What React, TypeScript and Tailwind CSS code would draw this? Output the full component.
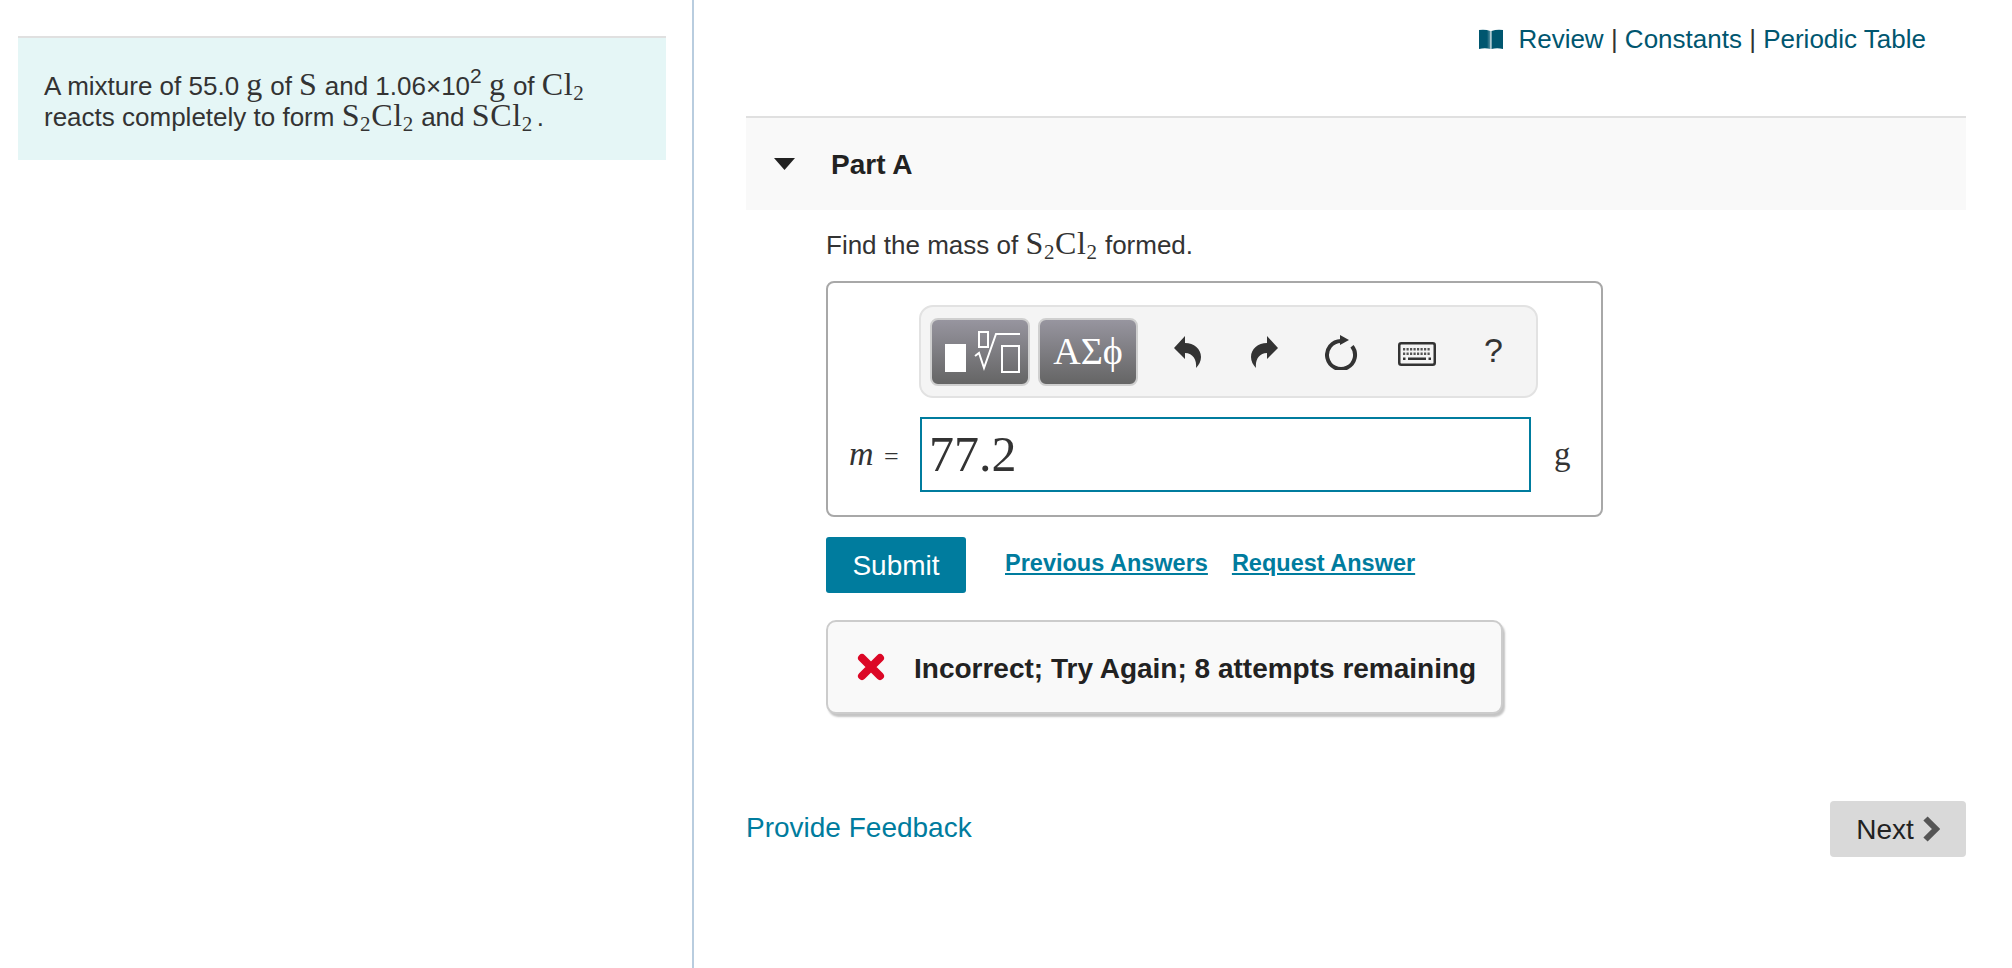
const sans = "font-['Liberation_Sans',Arial,sans-serif]";
const serif = "font-['Liberation_Serif','Times_New_Roman',serif]";

function Sub({ children }: { children: string }) {
  return <sub className="relative -bottom-[5px] align-baseline text-[21px] leading-none">{children}</sub>;
}

function M({ children }: { children: React.ReactNode }) {
  return <span className={`${serif} text-[32px] leading-none tracking-[0.02em]`}>{children}</span>;
}

function BookIcon() {
  return (
    <svg width="24" height="21" viewBox="0 0 24 21">
      <defs>
        <linearGradient id="page" x1="0" x2="1" y1="0" y2="0">
          <stop offset="0" stopColor="#00566f" />
          <stop offset="0.7" stopColor="#00566f" />
          <stop offset="1" stopColor="#5f93a3" />
        </linearGradient>
      </defs>
      <path d="M0 1 Q6 0 11.5 2 V20 Q6 18.5 0 20 Z" fill="url(#page)" />
      <path d="M24 1 Q18 0 12.5 2 V20 Q18 18.5 24 20 Z" fill="#00566f" />
    </svg>
  );
}

function UndoIcon({ flip }: { flip?: boolean }) {
  return (
    <svg width="27" height="32" viewBox="0 0 27 32" fill="#333" className={flip ? "-scale-x-100" : ""}>
      <path d="M0 12 L11 0 V7 C20 7 27 13 27 21 C27 25 25 29 22 32 C23 24 19 17 11 17 V23 Z" />
    </svg>
  );
}

function ResetIcon() {
  return (
    <svg width="34" height="36" viewBox="0 0 34 36">
      <path d="M16 7 A14 14 0 1 0 27 12.3" fill="none" stroke="#333" strokeWidth="4" />
      <path d="M15 1 L24 6 L15 11 Z" fill="#333" />
    </svg>
  );
}

function KeyboardIcon() {
  const keys = [5, 8.5, 12, 15.5, 19, 22.5, 26, 29.5];
  return (
    <svg width="38" height="24" viewBox="0 0 38 24">
      <rect x="1.25" y="1.25" width="35.5" height="21.5" rx="2" fill="#f4f4f4" stroke="#333" strokeWidth="2.5" />
      {[6, 10.5].map((y) => keys.map((x) => <rect key={`${y}-${x}`} x={x} y={y} width="2.2" height="2.5" fill="#555" />))}
      <rect x="5" y="15.5" width="2.5" height="2.5" fill="#333" />
      <rect x="10" y="15.5" width="18" height="2.5" fill="#333" />
      <rect x="30.5" y="15.5" width="2.5" height="2.5" fill="#333" />
    </svg>
  );
}

function TemplateIcon() {
  return (
    <svg width="96" height="64" viewBox="0 0 96 64" fill="none" stroke="#fff" strokeWidth="2">
      <rect x="13" y="24" width="21" height="28" fill="#fff" stroke="none" />
      <rect x="47" y="12" width="9" height="15" />
      <path d="M43 36 L47 33 L52 48 L64 14 H88" />
      <rect x="70" y="26" width="17" height="26" />
    </svg>
  );
}

export default function App() {
  const toolBtn =
    "flex h-[68px] w-[100px] items-center justify-center rounded-[8px] border-2 border-[#cfcfcf] bg-gradient-to-b from-[#97959f] to-[#656565]";
  return (
    <div className={`${sans} flex h-[968px] w-[2012px] overflow-hidden bg-white text-[26px] leading-[31px] text-[#333]`}>
      <aside className="h-full w-[694px] shrink-0 border-r-2 border-[#b9cddf] pl-[18px] pr-[26px] pt-[36px]">
        <div className="h-[124px] border-t-2 border-[#e0e0e0] bg-[#e5f6f6] pl-[26px] pt-[30px]">
          <p className="h-[31px]">
            A mixture of 55.0 <M>g</M> of <M>S</M> and 1.06×10
            <sup className="relative -top-[12px] align-baseline text-[21px] leading-none">2</sup> <M>g</M> of{" "}
            <M>
              Cl<Sub>2</Sub>
            </M>
          </p>
          <p className="h-[31px]">
            reacts completely to form{" "}
            <M>
              S<Sub>2</Sub>Cl<Sub>2</Sub>
            </M>{" "}
            and{" "}
            <M>
              SCl<Sub>2</Sub>
            </M>
            <span className="ml-[4px]">.</span>
          </p>
        </div>
      </aside>

      <main className="min-w-0 flex-1 pl-[52px] pr-[46px]">
        <div className="flex h-[116px] items-start justify-end pr-[40px] pt-[24px]">
          <div className="mr-[15px] mt-[5px]">
            <BookIcon />
          </div>
          <div className="text-[#00566f]">
            Review <span className="text-[#333]">|</span> Constants <span className="text-[#333]">|</span> Periodic Table
          </div>
        </div>

        <div className="flex h-[94px] items-center border-t-2 border-[#e0e0e0] bg-[#f9f9f9] pl-[28px]">
          <svg width="21" height="12" viewBox="0 0 21 12" fill="#222">
            <path d="M0 0 H21 L10.5 12 Z" />
          </svg>
          <h2 className="ml-[36px] text-[28px] font-bold text-[#222]">Part A</h2>
        </div>

        <div className="pl-[80px]">
          <p className="mt-[17px] h-[31px]">
            Find the mass of{" "}
            <M>
              S<Sub>2</Sub>Cl<Sub>2</Sub>
            </M>{" "}
            formed.
          </p>

          <div className="mt-[23px] h-[236px] w-[777px] rounded-[8px] border-2 border-[#a8a8a8] pl-[91px] pt-[22px]">
            <div className="flex h-[93px] w-[619px] items-center rounded-[14px] border-2 border-[#e2e2e2] bg-[#f4f4f4] pl-[9px]">
              <div className={toolBtn}>
                <TemplateIcon />
              </div>
              <div className={`${toolBtn} ml-[8px] ${serif} text-[38px] text-white`}>ΑΣϕ</div>
              <div className="ml-[36px]">
                <UndoIcon />
              </div>
              <div className="ml-[50px]">
                <UndoIcon flip />
              </div>
              <div className="ml-[47px]">
                <ResetIcon />
              </div>
              <div className="ml-[39px] mt-[5px]">
                <KeyboardIcon />
              </div>
              <div className="ml-[48px] -mt-[3px] text-[34px]">?</div>
            </div>

            <div className="mt-[19px] flex items-center">
              <span className={`${serif} -ml-[70px] w-[71px] text-[34px]`}>
                <i>m</i> <span className="ml-[2px] text-[26px]">=</span>
              </span>
              <div className="flex h-[75px] w-[611px] items-center border-2 border-[#007c9e] pl-[7px]">
                <span className={`${serif} text-[50px]`}>77.2</span>
              </div>
              <span className={`${serif} ml-[23px] text-[33px]`}>g</span>
            </div>
          </div>

          <div className="mt-[20px] flex items-center">
            <button className="h-[56px] w-[140px] rounded-[3px] bg-[#007c9e] text-[28px] text-white">Submit</button>
            <a className="ml-[39px] -mt-[3px] text-[23.5px] font-bold text-[#007c9e] underline">Previous Answers</a>
            <a className="ml-[24px] -mt-[3px] text-[23.5px] font-bold text-[#007c9e] underline">Request Answer</a>
          </div>

          <div className="mt-[27px] flex h-[94px] w-[677px] items-center rounded-[10px] border-2 border-[#cccccc] bg-[#f9f9f9] pl-[29px] shadow-[2px_3px_2px_#c4c4c4]">
            <svg width="28" height="28" viewBox="0 0 28 28" stroke="#dc0726" strokeWidth="8" strokeLinecap="round">
              <path d="M5 5 L23 23 M23 5 L5 23" />
            </svg>
            <strong className="ml-[29px] mt-[2px] text-[28px] text-[#222]">Incorrect; Try Again; 8 attempts remaining</strong>
          </div>
        </div>

        <div className="mt-[87px] flex items-start justify-between">
          <a className="mt-[11px] text-[28px] text-[#007c9e]">Provide Feedback</a>
          <button className="flex h-[56px] w-[136px] items-center justify-center rounded-[4px] bg-[#d9d9d9] text-[28px] text-[#222]">
            Next
            <svg className="ml-[9px]" width="17" height="26" viewBox="0 0 17 26" fill="none" stroke="#555" strokeWidth="6">
              <path d="M2.5 2.5 L13 13 L2.5 23.5" />
            </svg>
          </button>
        </div>
      </main>
    </div>
  );
}
